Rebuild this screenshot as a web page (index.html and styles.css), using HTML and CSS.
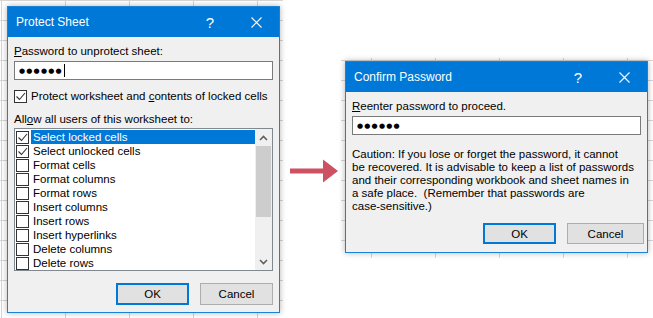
FILE: index.html
```html
<!DOCTYPE html>
<html lang="en">
<head>
    <meta charset="UTF-8">
    <meta name="viewport" content="width=device-width, initial-scale=1.0">
    <title>Protect Sheet</title>
    <link rel="stylesheet" href="styles.css">
</head>
<body>
    <div class="stage">
        <!-- Left: Protect Sheet dialog over the worksheet -->
        <div class="sheet sheet-left">
            <div class="dialog dialog-protect">
                <div class="titlebar">
                    <span class="title">Protect Sheet</span>
                    <span class="caption-btn help">?</span>
                    <span class="caption-btn close">
                        <svg width="11" height="11" viewBox="0 0 11 11"><path d="M0.5 0.5 L10.5 10.5 M10.5 0.5 L0.5 10.5" stroke="#fff" stroke-width="1.1" fill="none"/></svg>
                    </span>
                </div>
                <div class="body">
                    <div class="label"><u>P</u>assword to unprotect sheet:</div>
                    <div class="field"><span class="dots">●●●●●●</span><span class="caret"></span></div>
                    <div class="check-row">
                        <span class="box"><svg width="11" height="11" viewBox="0 0 11 11"><path d="M1.5 5.5 L4.5 8.5 L10 2" stroke="#333" stroke-width="1.1" fill="none"/></svg></span>
                        <span>Protect worksheet and <u>c</u>ontents of locked cells</span>
                    </div>
                    <div class="label label-allow">All<u>o</u>w all users of this worksheet to:</div>
                    <div class="listbox">
                        <ul class="items">
                            <li class="item selected"><span class="box"><svg width="11" height="11" viewBox="0 0 11 11"><path d="M1.5 5.5 L4.5 8.5 L10 2" stroke="#333" stroke-width="1.1" fill="none"/></svg></span><span class="text">Select locked cells</span></li>
                            <li class="item"><span class="box"><svg width="11" height="11" viewBox="0 0 11 11"><path d="M1.5 5.5 L4.5 8.5 L10 2" stroke="#333" stroke-width="1.1" fill="none"/></svg></span><span class="text">Select unlocked cells</span></li>
                            <li class="item"><span class="box"></span><span class="text">Format cells</span></li>
                            <li class="item"><span class="box"></span><span class="text">Format columns</span></li>
                            <li class="item"><span class="box"></span><span class="text">Format rows</span></li>
                            <li class="item"><span class="box"></span><span class="text">Insert columns</span></li>
                            <li class="item"><span class="box"></span><span class="text">Insert rows</span></li>
                            <li class="item"><span class="box"></span><span class="text">Insert hyperlinks</span></li>
                            <li class="item"><span class="box"></span><span class="text">Delete columns</span></li>
                            <li class="item"><span class="box"></span><span class="text">Delete rows</span></li>
                        </ul>
                        <div class="scrollbar">
                            <span class="scroll-arrow"><svg width="9" height="6" viewBox="0 0 9 6"><path d="M1 5 L4.5 1.5 L8 5" stroke="#606060" stroke-width="1.6" fill="none"/></svg></span>
                            <span class="thumb"></span>
                            <span class="track-rest"></span>
                            <span class="scroll-arrow"><svg width="9" height="6" viewBox="0 0 9 6"><path d="M1 1 L4.5 4.5 L8 1" stroke="#606060" stroke-width="1.6" fill="none"/></svg></span>
                        </div>
                    </div>
                    <div class="buttons">
                        <button class="btn btn-default">OK</button>
                        <button class="btn">Cancel</button>
                    </div>
                </div>
            </div>
        </div>

        <!-- Arrow between the two dialogs -->
        <div class="connector">
            <svg width="48" height="24" viewBox="0 0 48 24">
                <path d="M0 9.5 H33 V0.5 L48 12 L33 23.5 V14.5 H0 Z" fill="#cc5263"/>
            </svg>
        </div>

        <!-- Right: Confirm Password dialog -->
        <div class="sheet sheet-right">
            <div class="dialog dialog-confirm">
                <div class="titlebar">
                    <span class="title">Confirm Password</span>
                    <span class="caption-btn help">?</span>
                    <span class="caption-btn close">
                        <svg width="11" height="11" viewBox="0 0 11 11"><path d="M0.5 0.5 L10.5 10.5 M10.5 0.5 L0.5 10.5" stroke="#fff" stroke-width="1.1" fill="none"/></svg>
                    </span>
                </div>
                <div class="body">
                    <div class="label"><u>R</u>eenter password to proceed.</div>
                    <div class="field"><span class="dots">●●●●●●</span></div>
                    <p class="caution">Caution: If you lose or forget the password, it cannot<br>be recovered. It is advisable to keep a list of passwords<br>and their corresponding workbook and sheet names in<br>a safe place.&nbsp; (Remember that passwords are<br>case-sensitive.)</p>
                    <div class="buttons buttons-confirm">
                        <button class="btn btn-default">OK</button>
                        <button class="btn btn-wide">Cancel</button>
                    </div>
                </div>
            </div>
        </div>
    </div>
</body>
</html>
```

FILE: styles.css
```css
body {
    margin: 0;
    padding: 0;
    background-color: #fff;
    color: #000;
    font-family: "Liberation Sans", Arial, sans-serif;
    font-size: 11.5px;
}

.stage {
    display: flex;
    align-items: flex-start;
    width: 653px;
    height: 318px;
    overflow: hidden;
}

/* Excel grid behind the dialogs */
.sheet {
    box-sizing: border-box;
    background-color: #fff;
    background-image:
        linear-gradient(to bottom, #d6d6d6 1px, transparent 1px),
        linear-gradient(to right, #d6d6d6 1px, transparent 1px);
    background-size: 64px 20px;
}

.sheet-left {
    width: 283px;
    height: 318px;
    padding: 6px 0 0 7px;
    background-position: 1px 0;
}

.sheet-right {
    width: 312px;
    height: 200px;
    margin-top: 58px;
    padding: 3px 0 0 4px;
    background-position: 30px 2px;
}

.connector {
    box-sizing: border-box;
    width: 58px;
    padding: 159px 0 0 7px;
}

.connector svg {
    display: block;
}

/* Dialog frame */
.dialog {
    box-sizing: border-box;
    display: flex;
    flex-direction: column;
    background-color: #f0f0f0;
    border: 1px solid #1883d7;
    box-shadow: 0 0 6px rgba(0, 0, 0, 0.3);
}

.dialog-protect {
    width: 273px;
    height: 307px;
}

.dialog-confirm {
    width: 303px;
    height: 192px;
}

.titlebar {
    display: flex;
    align-items: center;
    height: 30px;
    background-color: #0078d7;
    color: #fff;
}

.title {
    flex: 1;
    padding-left: 8px;
    font-size: 12px;
}

.caption-btn {
    display: flex;
    align-items: center;
    justify-content: center;
    width: 46px;
    height: 30px;
}

.help {
    font-size: 15px;
}

.body {
    display: flex;
    flex-direction: column;
    padding: 7px 6px 7px 6px;
}

.label {
    line-height: 15px;
}

.label-allow {
    margin-top: 8px;
}

.field {
    display: flex;
    align-items: center;
    height: 17px;
    margin-top: 2px;
    padding-left: 4px;
    background-color: #fff;
    border: 1px solid #7a7a7a;
}

.dots {
    font-family: "DejaVu Sans", sans-serif;
    font-size: 7px;
    letter-spacing: 1.2px;
}

.caret {
    width: 1px;
    height: 13px;
    margin-left: 1px;
    background-color: #000;
}

.check-row {
    display: flex;
    align-items: center;
    gap: 4px;
    margin-top: 9px;
    line-height: 15px;
}

.box {
    box-sizing: border-box;
    display: flex;
    align-items: center;
    justify-content: center;
    width: 13px;
    height: 13px;
    flex: none;
    background-color: #fff;
    border: 1px solid #333;
}

/* Options list */
.listbox {
    display: flex;
    height: 143px;
    box-sizing: border-box;
    margin-top: 1px;
    background-color: #fff;
    border: 1px solid #828790;
}

.items {
    flex: 1;
    margin: 0;
    padding: 1px 0 0 1px;
    list-style: none;
}

.item {
    display: flex;
    align-items: center;
    height: 14px;
}

.item .text {
    flex: 1;
    height: 14px;
    margin-left: 2px;
    padding-left: 2px;
    line-height: 14px;
}

.item.selected .text {
    background-color: #0078d7;
    color: #fff;
}

.scrollbar {
    display: flex;
    flex-direction: column;
    width: 17px;
    background-color: #f0f0f0;
}

.scroll-arrow {
    display: flex;
    align-items: center;
    justify-content: center;
    height: 17px;
}

.thumb {
    height: 71px;
    margin: 0 1px;
    background-color: #cdcdcd;
}

.track-rest {
    flex: 1;
}

/* Buttons */
.buttons {
    display: flex;
    justify-content: flex-end;
    gap: 11px;
    margin-top: 12px;
}

.btn {
    box-sizing: border-box;
    width: 73px;
    height: 22px;
    padding: 0;
    font-family: inherit;
    font-size: 11.5px;
    color: #000;
    background-color: #e1e1e1;
    border: 1px solid #adadad;
}

.btn-default {
    border: 2px solid #0078d7;
}

.caution {
    margin: 13px 0 0 0;
    line-height: 13px;
}

.buttons-confirm {
    margin-top: 10px;
    margin-right: -3px;
}

.buttons-confirm .btn {
    height: 21px;
}

.btn-wide {
    width: 77px;
}
```
